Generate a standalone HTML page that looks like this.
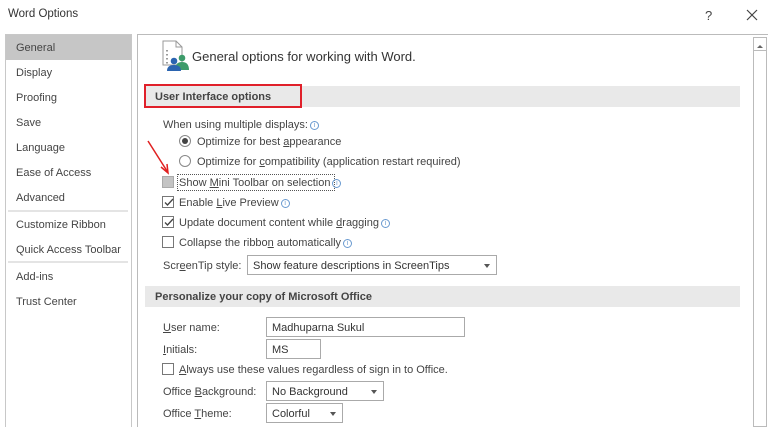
<!DOCTYPE html>
<html><head><meta charset="utf-8"><style>
*{margin:0;padding:0;box-sizing:border-box}
body{width:768px;height:427px;overflow:hidden;background:#fff;font-family:"Liberation Sans",sans-serif;font-size:11px;color:#444;position:relative}
.a{position:absolute;white-space:nowrap}
.t{margin-top:1px}
.nav{position:absolute;left:16px;color:#444;font-size:11px;margin-top:1px}
.cb{position:absolute;width:12px;height:12px;border:1px solid #777;background:#fff}
.rd{position:absolute;width:12px;height:12px;border:1px solid #888;border-radius:50%;background:#fff}
.box{position:absolute;border:1px solid #aaa;background:#fff;padding-left:5px;font-size:11px;color:#333;display:flex;align-items:center;padding-top:1px}
.dd:after{content:"";position:absolute;right:6px;top:8px;border:3.5px solid transparent;border-top:4px solid #555}
.band{position:absolute;left:145px;width:595px;height:21px;background:#e9e9e9;font-weight:bold;color:#444;padding-left:10px;line-height:22px;font-size:11px}
.i{display:inline-block;width:9px;height:9px;border:1px solid #6a9ad0;border-radius:50%;font-size:7px;line-height:8px;text-align:center;color:#6a9ad0;vertical-align:1px;margin-left:2px}
u{text-decoration:underline}
</style></head><body>
<div class="a" style="left:8px;top:8px;font-size:11.5px;color:#333">Word Options</div>
<div class="a" style="left:705px;top:8px;font-size:13px;color:#444">?</div>
<svg class="a" style="left:746px;top:9px" width="12" height="12"><path d="M1 1L11 11M11 1L1 11" stroke="#444" stroke-width="1.2"/></svg>

<div class="a" style="left:5px;top:34px;width:127px;height:393px;border:1px solid #c8c8c8;border-bottom:none"></div>
<div class="a" style="left:6px;top:35px;width:125px;height:25px;background:#c6c6c6"></div>
<div class="nav" style="top:41px">General</div>
<div class="nav" style="top:66px">Display</div>
<div class="nav" style="top:91px">Proofing</div>
<div class="nav" style="top:116px">Save</div>
<div class="nav" style="top:141px">Language</div>
<div class="nav" style="top:166px">Ease of Access</div>
<div class="nav" style="top:191px">Advanced</div>
<div class="a" style="left:8px;top:210px;width:120px;height:2px;background:#e4e4e4"></div>
<div class="nav" style="top:218px">Customize Ribbon</div>
<div class="nav" style="top:243px">Quick Access Toolbar</div>
<div class="a" style="left:8px;top:261px;width:120px;height:2px;background:#e4e4e4"></div>
<div class="nav" style="top:270px">Add-ins</div>
<div class="nav" style="top:295px">Trust Center</div>

<div class="a" style="left:137px;top:34px;width:631px;height:393px;border-left:1px solid #bbb;border-top:1px solid #bbb"></div>
<div class="a" style="left:753px;top:37px;width:14px;height:390px;border:1px solid #bbb;background:#fff"></div>
<div class="a" style="left:753px;top:37px;width:14px;height:14px;border:1px solid #bbb"></div>
<div class="a" style="left:757px;top:42px;border:3px solid transparent;border-bottom:3px solid #666"></div>

<svg class="a" style="left:161px;top:40px" width="28" height="32">
<path d="M2 1H15L21 7V25H2Z" fill="#fff" stroke="#999"/><path d="M15 1V7H21" fill="none" stroke="#999"/>
<g fill="#999"><rect x="5" y="10" width="2" height="1.5"/><rect x="5" y="14" width="2" height="1.5"/><rect x="5" y="18" width="2" height="1.5"/><rect x="5" y="22" width="2" height="1.5"/></g>
<circle cx="21" cy="18" r="3.3" fill="#3d9b6a"/><path d="M14 30Q14 22 21 22Q28 22 28 30Z" fill="#3d9b6a"/>
<circle cx="13" cy="21" r="3.3" fill="#2b64b0"/><path d="M6 31Q6 25 13 25Q20 25 20 31Z" fill="#2b64b0"/>
</svg>
<div class="a" style="left:192px;top:49px;font-size:13px;color:#333">General options for working with Word.</div>

<div class="band" style="top:86px">User Interface options</div>
<div class="a" style="left:144px;top:84px;width:158px;height:24px;border:2px solid #e0202a"></div>

<div class="a t" style="left:163px;top:118px">When using multiple displays:<span class="i">i</span></div>
<div class="rd" style="left:179px;top:135px"></div><div class="a" style="left:182px;top:138px;width:6px;height:6px;border-radius:50%;background:#444"></div>
<div class="a t" style="left:197px;top:135px">Optimize for best <u>a</u>ppearance</div>
<div class="rd" style="left:179px;top:155px"></div>
<div class="a t" style="left:197px;top:155px">Optimize for <u>c</u>ompatibility (application restart required)</div>

<svg class="a" style="left:144px;top:138px" width="30" height="38"><path d="M4 3L23 33" stroke="#e02020" stroke-width="1.5"/><path d="M17 29L24 35L23 26" fill="none" stroke="#e02020" stroke-width="1.5"/></svg>

<div class="a" style="left:162px;top:176px;width:12px;height:12px;background:#c4c4c4;border:1px solid #aaa"></div>
<div class="a" style="left:177px;top:174px;width:158px;height:17px;border:1px dotted #555"></div>
<div class="a t" style="left:179px;top:176px">Show <u>M</u>ini Toolbar on selection<span class="i">i</span></div>

<div class="cb" style="left:162px;top:196px"></div><svg class="a" style="left:164px;top:198px" width="10" height="9"><path d="M1 4.5L3.5 7L9 1" fill="none" stroke="#444" stroke-width="1.3"/></svg>
<div class="a t" style="left:179px;top:196px">Enable <u>L</u>ive Preview<span class="i">i</span></div>
<div class="cb" style="left:162px;top:216px"></div><svg class="a" style="left:164px;top:218px" width="10" height="9"><path d="M1 4.5L3.5 7L9 1" fill="none" stroke="#444" stroke-width="1.3"/></svg>
<div class="a t" style="left:179px;top:216px">Update document content while <u>d</u>ragging<span class="i">i</span></div>
<div class="cb" style="left:162px;top:236px"></div>
<div class="a t" style="left:179px;top:236px">Collapse the ribbo<u>n</u> automatically<span class="i">i</span></div>

<div class="a t" style="left:163px;top:259px">Scr<u>e</u>enTip style:</div>
<div class="box dd" style="left:247px;top:255px;width:250px;height:20px">Show feature descriptions in ScreenTips</div>

<div class="band" style="top:286px">Personalize your copy of Microsoft Office</div>
<div class="a t" style="left:163px;top:321px"><u>U</u>ser name:</div>
<div class="box" style="left:266px;top:317px;width:199px;height:20px">Madhuparna Sukul</div>
<div class="a t" style="left:163px;top:343px"><u>I</u>nitials:</div>
<div class="box" style="left:266px;top:339px;width:55px;height:20px">MS</div>
<div class="cb" style="left:162px;top:363px"></div>
<div class="a t" style="left:179px;top:363px"><u>A</u>lways use these values regardless of sign in to Office.</div>
<div class="a t" style="left:163px;top:385px">Office <u>B</u>ackground:</div>
<div class="box dd" style="left:266px;top:381px;width:118px;height:20px">No Background</div>
<div class="a t" style="left:163px;top:407px">Office <u>T</u>heme:</div>
<div class="box dd" style="left:266px;top:403px;width:77px;height:20px">Colorful</div>
</body></html>
